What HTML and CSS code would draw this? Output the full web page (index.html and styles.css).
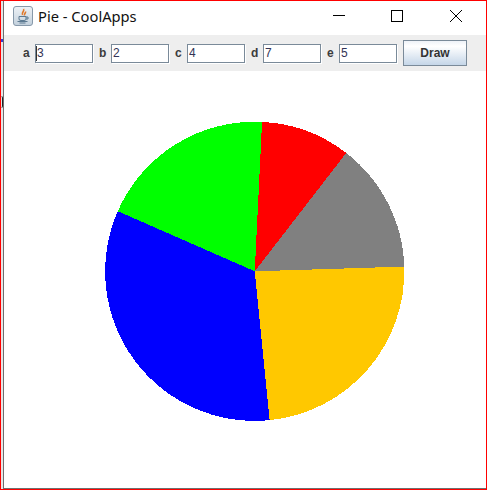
FILE: index.html
```html
<!DOCTYPE html>
<html lang="en">

    <head>
        <meta charset="UTF-8">
        <meta name="viewport" content="width=device-width, initial-scale=1.0">
        <title>Pie - CoolApps</title>
        <link rel="stylesheet" href="styles.css">
    </head>

    <body>
        <div class="screen">
            <span class="behind behind_link"></span>
            <span class="behind behind_curve"></span>

            <main class="window">
                <header class="titlebar">
                    <svg class="titlebar_icon" width="20" height="20" viewBox="0 0 20 20">
                        <defs>
                            <linearGradient id="iconBg" x1="0" y1="0" x2="0" y2="1">
                                <stop offset="0" stop-color="#eef2f6"/>
                                <stop offset="1" stop-color="#c2d0dc"/>
                            </linearGradient>
                        </defs>
                        <rect x="0.5" y="0.5" width="19" height="19" rx="2.5" fill="url(#iconBg)" stroke="#8799aa"/>
                        <path d="M10.5 3 C12 5 8 6.5 9.5 9 M12.5 5.5 C13 7 11 7.5 11.5 9.5" fill="none" stroke="#e0782a" stroke-width="1.6"/>
                        <path d="M6 10.5 H13 V13 Q13 14.5 11 14.5 H8 Q6 14.5 6 13 Z M13 11 H15 V13 H13" fill="none" stroke="#5d7a92" stroke-width="1"/>
                        <path d="M4.5 15.5 H14.5 M6.5 17 H12.5" stroke="#5d7a92" stroke-width="1"/>
                    </svg>
                    <span class="titlebar_text">Pie - CoolApps</span>
                    <div class="controls">
                        <svg class="control" width="59" height="24" viewBox="0 0 59 24">
                            <path d="M24 11.5 H36" stroke="#000" fill="none"/>
                        </svg>
                        <svg class="control" width="59" height="24" viewBox="0 0 59 24">
                            <rect x="23.5" y="6.5" width="11" height="11" stroke="#000" fill="none"/>
                        </svg>
                        <svg class="control" width="59" height="24" viewBox="0 0 59 24">
                            <path d="M23 6 L35 18 M35 6 L23 18" stroke="#000" fill="none"/>
                        </svg>
                    </div>
                </header>

                <form class="toolbar">
                    <label class="field"><span class="field_label">a</span><input class="field_input field_input-focus" value="3"></label>
                    <label class="field"><span class="field_label">b</span><input class="field_input" value="2"></label>
                    <label class="field"><span class="field_label">c</span><input class="field_input" value="4"></label>
                    <label class="field"><span class="field_label">d</span><input class="field_input" value="7"></label>
                    <label class="field"><span class="field_label">e</span><input class="field_input" value="5"></label>
                    <button type="button" class="draw">Draw</button>
                </form>

                <section class="canvas">
                    <svg class="pie" width="481" height="416" viewBox="0 0 481 416" shape-rendering="crispEdges">
                        <path fill="#808080" d="M250.75 200.3 L400.28 195.6 A149.6 149.6 0 0 0 342.23 81.94 Z"/>
                        <path fill="#ff0000" d="M250.75 200.3 L342.23 81.94 A149.6 149.6 0 0 0 258.06 50.88 Z"/>
                        <path fill="#00ff00" d="M250.75 200.3 L258.06 50.88 A149.6 149.6 0 0 0 113.76 140.18 Z"/>
                        <path fill="#0000ff" d="M250.75 200.3 L113.76 140.18 A149.6 149.6 0 0 0 265.61 349.16 Z"/>
                        <path fill="#ffc800" d="M250.75 200.3 L265.61 349.16 A149.6 149.6 0 0 0 400.28 195.6 Z"/>
                    </svg>
                </section>
            </main>
        </div>
    </body>

</html>
```
FILE: styles.css
```css
* {
    box-sizing: border-box;
    margin: 0;
    padding: 0;
}

html,
body {
    height: 100%;
}

body {
    background-color: #fff;
    font-family: "Liberation Sans", Arial, sans-serif;
}

.screen {
    position: relative;
    width: 487px;
    height: 490px;
    padding-left: 2px;
    border: 1px solid #ff0000;
    background-color: #e6e6e6;
}

.behind {
    position: absolute;
    left: 0;
    width: 2px;
}

.behind_link {
    top: 38px;
    height: 3px;
    background-color: #3a3ad0;
}

.behind_curve {
    top: 95px;
    height: 12px;
    border-right: 1px solid #222;
    border-radius: 0 4px 4px 0;
}

.window {
    display: flex;
    flex-direction: column;
    height: 100%;
    background-color: #fff;
    border-left: 1px solid #6e6e6e;
    border-bottom: 1px solid #707070;
}

.titlebar {
    display: flex;
    align-items: center;
    flex: none;
    height: 34px;
    padding: 0 0 4px 9px;
}

.titlebar_icon {
    margin-right: 5px;
}

.titlebar_text {
    font-family: "Noto Sans", sans-serif;
    font-size: 14.7px;
    color: #111;
}

.controls {
    display: flex;
    margin-left: auto;
}

.toolbar {
    display: flex;
    align-items: center;
    flex: none;
    height: 36px;
    padding-left: 19px;
    background-color: #eeeeee;
}

.field {
    display: flex;
    align-items: center;
    width: 76px;
}

.field_label {
    width: 12px;
    font-size: 12px;
    font-weight: 700;
    color: #3c3c3c;
}

.field_input {
    width: 58px;
    height: 19px;
    padding-left: 1px;
    border: 1px solid #7a8a99;
    box-shadow: 1px 1px 0 #fff;
    background-color: #fff;
    font-family: "Liberation Sans", Arial, sans-serif;
    font-size: 12px;
    color: #333355;
    outline: none;
}

.field_input-focus {
    background: linear-gradient(#333, #333) 0 1px / 1px 15px no-repeat #fff;
}

.draw {
    width: 64px;
    height: 26px;
    border: 1px solid #7a8a99;
    background: linear-gradient(#eef2f7, #fff 22%, #c5d6e8);
    font-family: "Liberation Sans", Arial, sans-serif;
    font-size: 12px;
    font-weight: 700;
    color: #333;
}

.canvas {
    flex: 1;
    overflow: hidden;
}

.pie {
    display: block;
}
```
